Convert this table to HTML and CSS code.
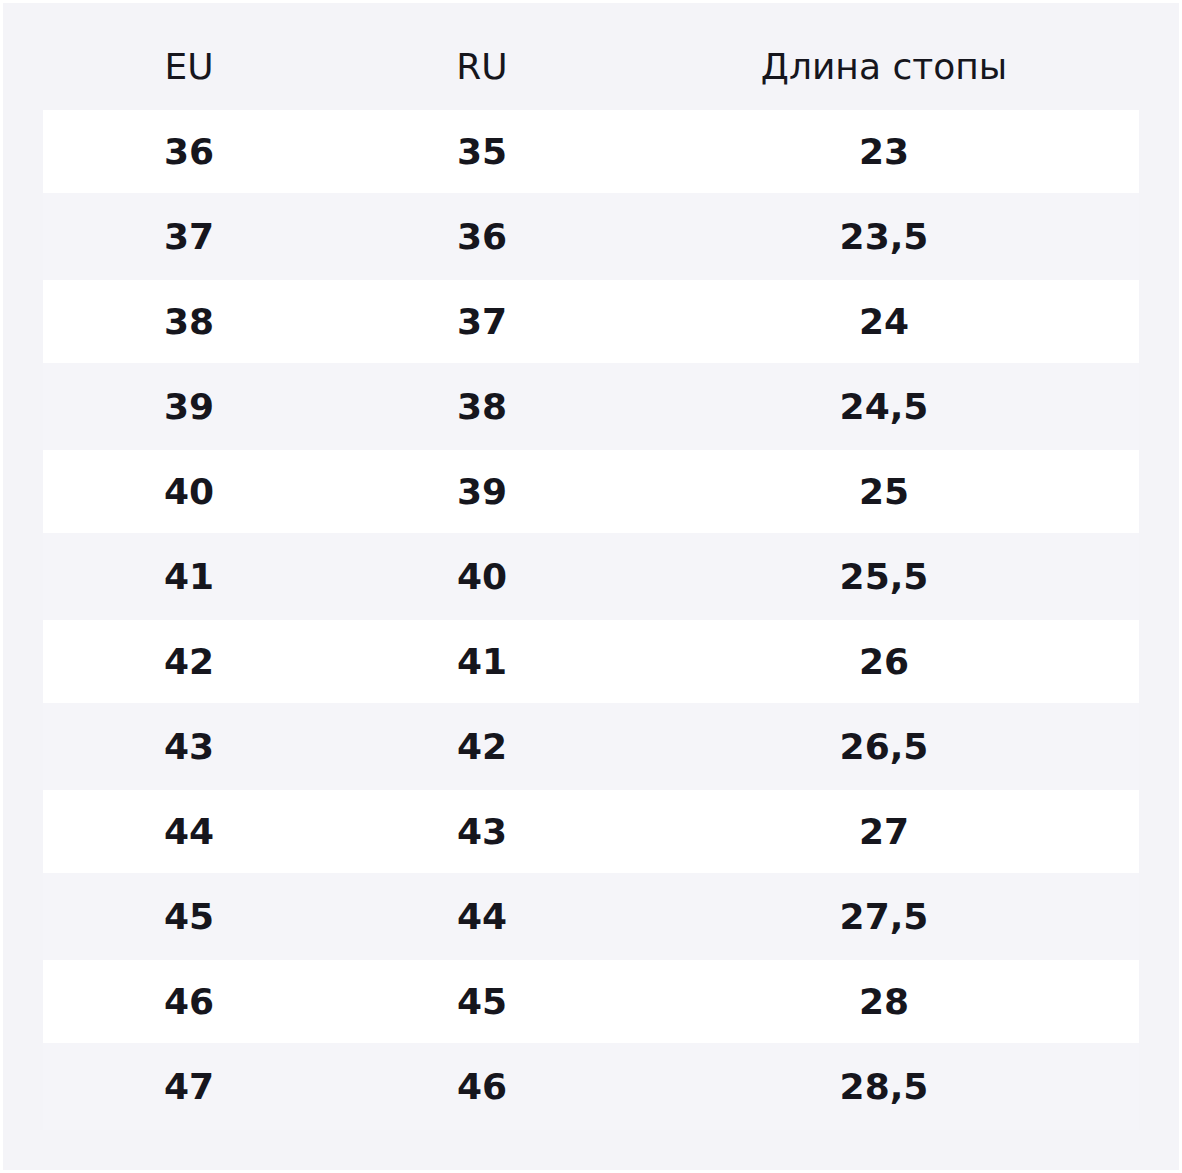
FILE: index.html
```html
<!DOCTYPE html>
<html lang="ru">
<head>
<meta charset="utf-8">
<title>Таблица размеров</title>
<link rel="stylesheet" href="styles.css">
</head>
<body>
<div class="panel">
  <div class="size-table">
    <div class="row head"><div class="cell">EU</div><div class="cell">RU</div><div class="cell">Длина стопы</div></div>
    <div class="row light"><div class="cell">36</div><div class="cell">35</div><div class="cell">23</div></div>
    <div class="row dark"><div class="cell">37</div><div class="cell">36</div><div class="cell">23,5</div></div>
    <div class="row light"><div class="cell">38</div><div class="cell">37</div><div class="cell">24</div></div>
    <div class="row dark"><div class="cell">39</div><div class="cell">38</div><div class="cell">24,5</div></div>
    <div class="row light"><div class="cell">40</div><div class="cell">39</div><div class="cell">25</div></div>
    <div class="row dark"><div class="cell">41</div><div class="cell">40</div><div class="cell">25,5</div></div>
    <div class="row light"><div class="cell">42</div><div class="cell">41</div><div class="cell">26</div></div>
    <div class="row dark"><div class="cell">43</div><div class="cell">42</div><div class="cell">26,5</div></div>
    <div class="row light"><div class="cell">44</div><div class="cell">43</div><div class="cell">27</div></div>
    <div class="row dark"><div class="cell">45</div><div class="cell">44</div><div class="cell">27,5</div></div>
    <div class="row light"><div class="cell">46</div><div class="cell">45</div><div class="cell">28</div></div>
    <div class="row dark"><div class="cell">47</div><div class="cell">46</div><div class="cell">28,5</div></div>
  </div>
</div>
</body>
</html>
```
FILE: styles.css
```css
html, body {
  margin: 0;
  padding: 0;
  background: #ffffff;
}
body {
  padding: 3px;
  font-family: "DejaVu Sans", "Liberation Sans", sans-serif;
  color: #16161d;
}
.panel {
  width: 1176px;
  height: 1167px;
  box-sizing: border-box;
  background: #f4f4f8;
  padding: 20px 40px 40px 40px;
}
.size-table {
  display: flex;
  flex-direction: column;
}
.row {
  display: grid;
  grid-template-columns: 292px 294px 510px;
  align-items: center;
  font-size: 36px;
  font-weight: 700;
}
.row.head {
  height: 87px;
  font-weight: 400;
}
.row.light {
  height: 83px;
  background: #ffffff;
}
.row.dark {
  height: 87px;
  background: #f5f5f9;
}
.cell {
  text-align: center;
  line-height: 1;
}
```
